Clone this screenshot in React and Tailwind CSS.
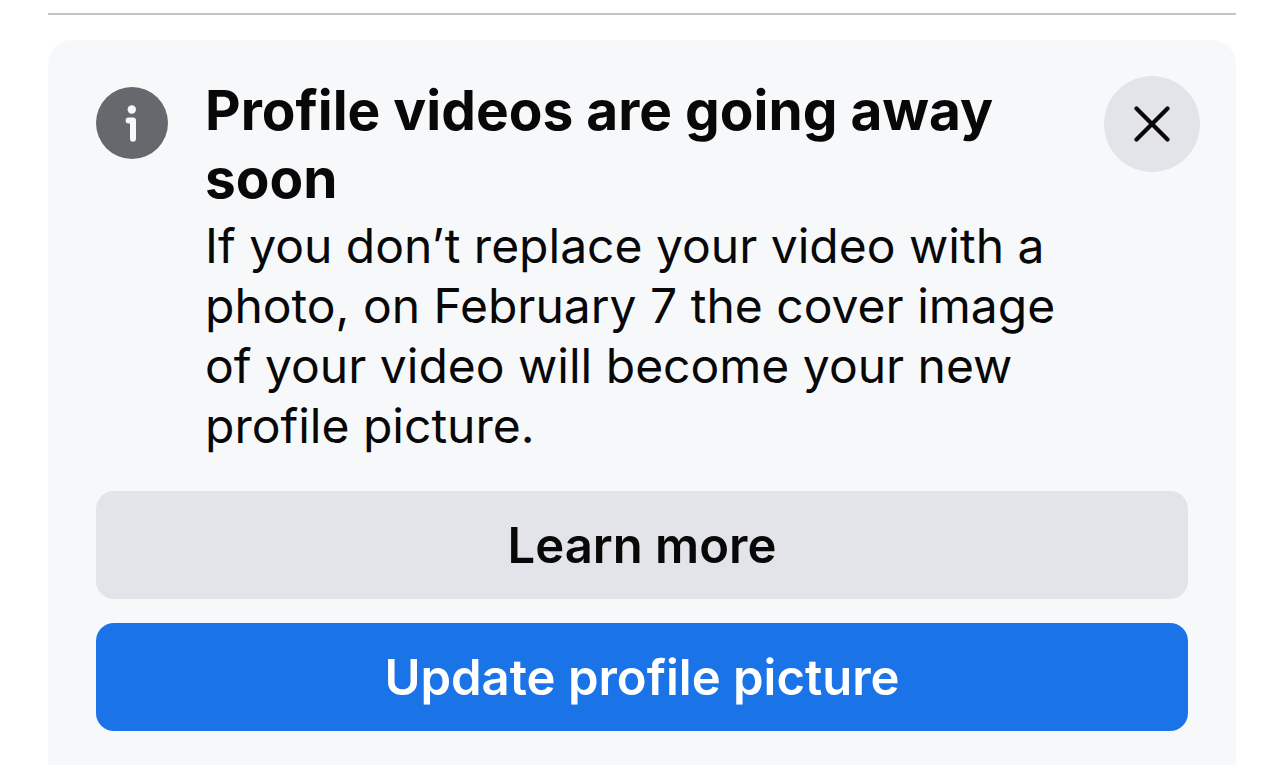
export default function App() {
  return (
    <main className="h-screen overflow-hidden bg-white px-12 pt-[13px] font-['Inter',sans-serif] text-[#080809]">
      <hr className="border-0 border-t-2 border-[#c4c5c8]" />
      <section aria-labelledby="notice-title" className="mt-[25px] rounded-3xl bg-[#f7f8fa] px-12 pt-9 pb-24">
        <div className="flex items-start">
          <svg viewBox="0 0 72 72" aria-hidden="true" className="mt-[11px] size-[72px] shrink-0">
            <circle cx="36" cy="36" r="36" fill="#65686c" />
            <circle cx="35.8" cy="22.5" r="4.2" fill="#f7f8fa" />
            <path d="M32.6 33.5H37V51.8" fill="none" stroke="#f7f8fa" strokeWidth="6" strokeLinecap="round" strokeLinejoin="round" />
          </svg>
          <div className="ml-[37px] min-w-0 flex-1">
            <h1 id="notice-title" className="text-[55px] leading-[68px] font-bold">Profile videos are going away<br />soon</h1>
            <p className="mt-1 text-[48px] leading-[60px]">If you don’t replace your video with a<br />photo, on February 7 the cover image<br />of your video will become your new<br />profile picture.</p>
          </div>
          <button type="button" aria-label="Close" className="-mr-3 flex size-24 shrink-0 items-center justify-center rounded-full bg-[#e3e4e9]">
            <svg viewBox="0 0 36 36" aria-hidden="true" className="size-9">
              <path d="M2.5 2.5l31 31M33.5 2.5l-31 31" stroke="#080809" strokeWidth="4.2" strokeLinecap="round" />
            </svg>
          </button>
        </div>
        <div className="mt-[35px] flex flex-col gap-6">
          <button type="button" className="h-[108px] w-full rounded-[18px] bg-[#e3e4e9] pt-0.5 text-[49px] font-semibold">Learn more</button>
          <button type="button" className="h-[108px] w-full rounded-[18px] bg-[#1b74e7] pt-0.5 text-[49px] font-semibold text-white">Update profile picture</button>
        </div>
      </section>
    </main>
  );
}
